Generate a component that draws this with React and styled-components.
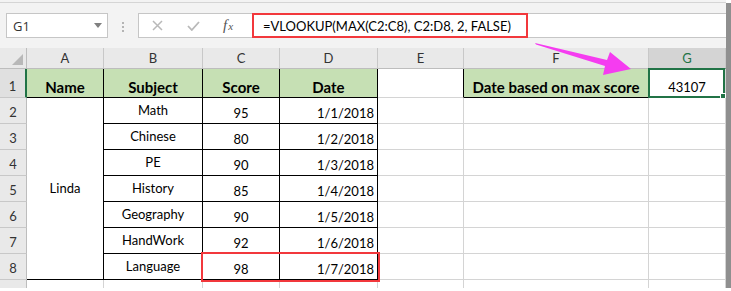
import React from 'react';
import styled, { createGlobalStyle } from 'styled-components';

const GRID = '#d4d4d4';
const BLACK = '#000000';
const FILL = '#c6e0b4';
const XL_GREEN = '#217346';

const GlobalStyle = createGlobalStyle`
  html, body { margin: 0; padding: 0; background: #ffffff; }
  body { font-family: Lato, "Liberation Sans", sans-serif; }
  *, *::before, *::after { box-sizing: border-box; }
`;

const Frame = styled.div`
  position: relative;
  width: 726px;
  height: 288px;
  overflow: hidden;
  background: #ffffff;
  box-shadow: 5px 3px 0 #8f8f8f;
`;

const Toolbar = styled.div`
  height: 48px;
  display: flex;
  align-items: flex-start;
  padding: 13px 0 0 6px;
  background: linear-gradient(#d5d5d5, #d5d5d5) 0 2px / 100% 1px no-repeat, #f3f3f3;
`;

const NameBox = styled.div`
  width: 102px;
  height: 25px;
  background: #ffffff;
  border: 1px solid #c6c6c6;
  display: flex;
  align-items: center;
  justify-content: space-between;
  padding: 0 5px 0 6px;
  font: 13px "Open Sans", sans-serif;
  color: #333333;
`;

const Caret = styled.span`
  width: 0;
  height: 0;
  border-left: 4px solid transparent;
  border-right: 4px solid transparent;
  border-top: 5px solid #808080;
`;

const Grip = styled.div`
  width: 30px;
  display: flex;
  flex-direction: column;
  align-items: center;
  gap: 2px;
  padding-top: 9px;
`;

const GripDot = styled.span`
  width: 2px;
  height: 2px;
  background: #b4b4b4;
`;

const FormulaBar = styled.div`
  flex: 1;
  height: 25px;
  display: flex;
  align-items: stretch;
  background: #ffffff;
  border: 1px solid #c6c6c6;
  border-right: none;
`;

const IconArea = styled.div`
  width: 113px;
  display: flex;
  align-items: center;
  padding-left: 13px;
`;

const IconSlot = styled.span`
  display: inline-flex;
  margin-right: ${p => p.$gap}px;
`;

const Fx = styled.span`
  font-family: "Liberation Serif", serif;
  font-style: italic;
  color: #555555;
  font-size: 15px;
  line-height: 1;
  display: inline-flex;
  align-items: baseline;
`;

const FxSub = styled.span`
  font-size: 11px;
  margin-left: 1px;
`;

const FormulaText = styled.div`
  width: 276px;
  margin: -1px 0;
  border: 2px solid #f2383c;
  display: flex;
  align-items: center;
  padding-left: 9px;
  font-size: 13px;
  color: #000000;
  white-space: nowrap;
`;

const Sheet = styled.div`
  display: grid;
  grid-template-columns: 27px 77px 99px 77px 98px 86px 185px 77px;
  grid-template-rows: 21px 29px repeat(8, 26px);
`;

const Corner = styled.div`
  background: #e9e9e9;
  border-right: 1px solid #bdbdbd;
  border-bottom: 1px solid #bdbdbd;
  display: flex;
  align-items: flex-end;
  justify-content: flex-end;
  padding: 0 3px 3px 0;
`;

const ColHead = styled.div`
  display: flex;
  align-items: center;
  justify-content: center;
  background: ${p => (p.$active ? '#d4d4d4' : '#e9e9e9')};
  color: ${p => (p.$active ? XL_GREEN : '#333333')};
  border-right: 1px solid #c8c8c8;
  border-bottom: 1px solid ${p => (p.$active ? XL_GREEN : '#bdbdbd')};
  font-size: 13px;
  line-height: 1;
`;

const RowHead = styled.div`
  display: flex;
  align-items: flex-end;
  justify-content: center;
  padding-bottom: 4px;
  background: ${p => (p.$active ? '#e0e0e0' : '#e9e9e9')};
  color: #333333;
  border-right: ${p => (p.$active ? `2px solid ${XL_GREEN}` : '1px solid #bdbdbd')};
  border-bottom: 1px solid #c8c8c8;
  font-size: 13px;
  line-height: 1;
`;

const Cell = styled.div`
  position: relative;
  display: flex;
  align-items: ${p => (p.$valign === 'center' ? 'center' : 'flex-end')};
  justify-content: ${p => (p.$align === 'right' ? 'flex-end' : 'center')};
  padding: 0 3px ${p => (p.$valign === 'center' ? 0 : p.$pb ?? 3)}px 3px;
  background: ${p => p.$fill || '#ffffff'};
  border-right: 1px solid ${p => p.$rb || GRID};
  border-bottom: 1px solid ${p => p.$bb || GRID};
  font-size: ${p => (p.$bold ? 15 : 13)}px;
  font-weight: ${p => (p.$bold ? 700 : 400)};
  color: #000000;
  white-space: nowrap;
  line-height: 1;
`;

const Merged = styled(Cell)`
  grid-column: 2;
  grid-row: 3 / span 7;
`;

const Selection = styled.div`
  position: absolute;
  top: -1px;
  left: -1px;
  right: 0;
  bottom: -1px;
  border: 2px solid ${XL_GREEN};
  pointer-events: none;
`;

const FillHandle = styled.span`
  position: absolute;
  right: -3px;
  bottom: -3px;
  width: 6px;
  height: 6px;
  background: ${XL_GREEN};
  border: 1px solid #ffffff;
`;

const Highlight = styled.div`
  grid-column: 4 / 6;
  grid-row: 9;
  position: relative;
  pointer-events: none;
`;

const HighlightBox = styled.div`
  position: absolute;
  inset: -2px -2px -2px -2px;
  border: 2px solid #f2383c;
`;

const ArrowLayer = styled.svg`
  position: absolute;
  left: 0;
  top: 0;
  pointer-events: none;
`;

const columns = ['A', 'B', 'C', 'D', 'E', 'F', 'G'];

const records = [
  ['Math', '95', '1/1/2018'],
  ['Chinese', '80', '1/2/2018'],
  ['PE', '90', '1/3/2018'],
  ['History', '85', '1/4/2018'],
  ['Geography', '90', '1/5/2018'],
  ['HandWork', '92', '1/6/2018'],
  ['Language', '98', '1/7/2018'],
];

function CancelIcon() {
  return (
    <svg width="11" height="11" viewBox="0 0 11 11">
      <path d="M1 1 L10 10 M10 1 L1 10" stroke="#b9b9b9" strokeWidth="1.5" fill="none" />
    </svg>
  );
}

function EnterIcon() {
  return (
    <svg width="13" height="10" viewBox="0 0 13 10">
      <path d="M1 5 L4.8 9 L12 1" stroke="#b9b9b9" strokeWidth="1.8" fill="none" />
    </svg>
  );
}

export default function App() {
  return (
    <>
      <GlobalStyle />
      <Frame>
        <Toolbar>
          <NameBox>
            <span>G1</span>
            <Caret />
          </NameBox>
          <Grip>
            <GripDot />
            <GripDot />
            <GripDot />
          </Grip>
          <FormulaBar>
            <IconArea>
              <IconSlot $gap={24}><CancelIcon /></IconSlot>
              <IconSlot $gap={23}><EnterIcon /></IconSlot>
              <Fx>f<FxSub>x</FxSub></Fx>
            </IconArea>
            <FormulaText>=VLOOKUP(MAX(C2:C8), C2:D8, 2, FALSE)</FormulaText>
          </FormulaBar>
        </Toolbar>

        <Sheet>
          <Corner>
            <svg width="11" height="11" viewBox="0 0 11 11">
              <polygon points="11,0 11,11 0,11" fill="#b8b8b8" />
            </svg>
          </Corner>
          {columns.map(c => (
            <ColHead key={c} $active={c === 'G'}>{c}</ColHead>
          ))}

          {/* Row 1 */}
          <RowHead $active>1</RowHead>
          <Cell $fill={FILL} $bold $pb={2} $rb={BLACK} $bb={BLACK}>Name</Cell>
          <Cell $fill={FILL} $bold $pb={2} $rb={BLACK} $bb={BLACK}>Subject</Cell>
          <Cell $fill={FILL} $bold $pb={2} $rb={BLACK} $bb={BLACK}>Score</Cell>
          <Cell $fill={FILL} $bold $pb={2} $rb={BLACK} $bb={BLACK}>Date</Cell>
          <Cell $rb={BLACK} />
          <Cell $fill={FILL} $bold $pb={2} $bb={BLACK}>Date based on max score</Cell>
          <Cell $pb={3}>
            43107
            <Selection>
              <FillHandle />
            </Selection>
          </Cell>

          <Merged $valign="center" $rb={BLACK} $bb={BLACK}>Linda</Merged>

          {records.map(([subject, score, date], i) => (
            <React.Fragment key={subject}>
              <RowHead style={{ gridRow: i + 3, gridColumn: 1 }}>{i + 2}</RowHead>
              <Cell style={{ gridRow: i + 3, gridColumn: 3 }} $valign="center" $rb={BLACK} $bb={BLACK}>{subject}</Cell>
              <Cell style={{ gridRow: i + 3, gridColumn: 4 }} $rb={BLACK} $bb={BLACK}>{score}</Cell>
              <Cell style={{ gridRow: i + 3, gridColumn: 5 }} $align="right" $rb={BLACK} $bb={BLACK}>{date}</Cell>
              <Cell style={{ gridRow: i + 3, gridColumn: 6 }} />
              <Cell style={{ gridRow: i + 3, gridColumn: 7 }} />
              <Cell style={{ gridRow: i + 3, gridColumn: 8 }} />
            </React.Fragment>
          ))}

          {/* Row 9 (partially visible) */}
          <RowHead style={{ gridRow: 10, gridColumn: 1 }}>9</RowHead>
          {columns.map((c, i) => (
            <Cell key={`r9${c}`} style={{ gridRow: 10, gridColumn: i + 2 }} />
          ))}

          <Highlight>
            <HighlightBox />
          </Highlight>
        </Sheet>

        <ArrowLayer width="726" height="288" viewBox="0 0 726 288">
          <polygon
            points="535,43 607,60 610,52 631,69 603,75 605,66 536,44.5"
            fill="#f53cf0"
          />
        </ArrowLayer>
      </Frame>
    </>
  );
}
